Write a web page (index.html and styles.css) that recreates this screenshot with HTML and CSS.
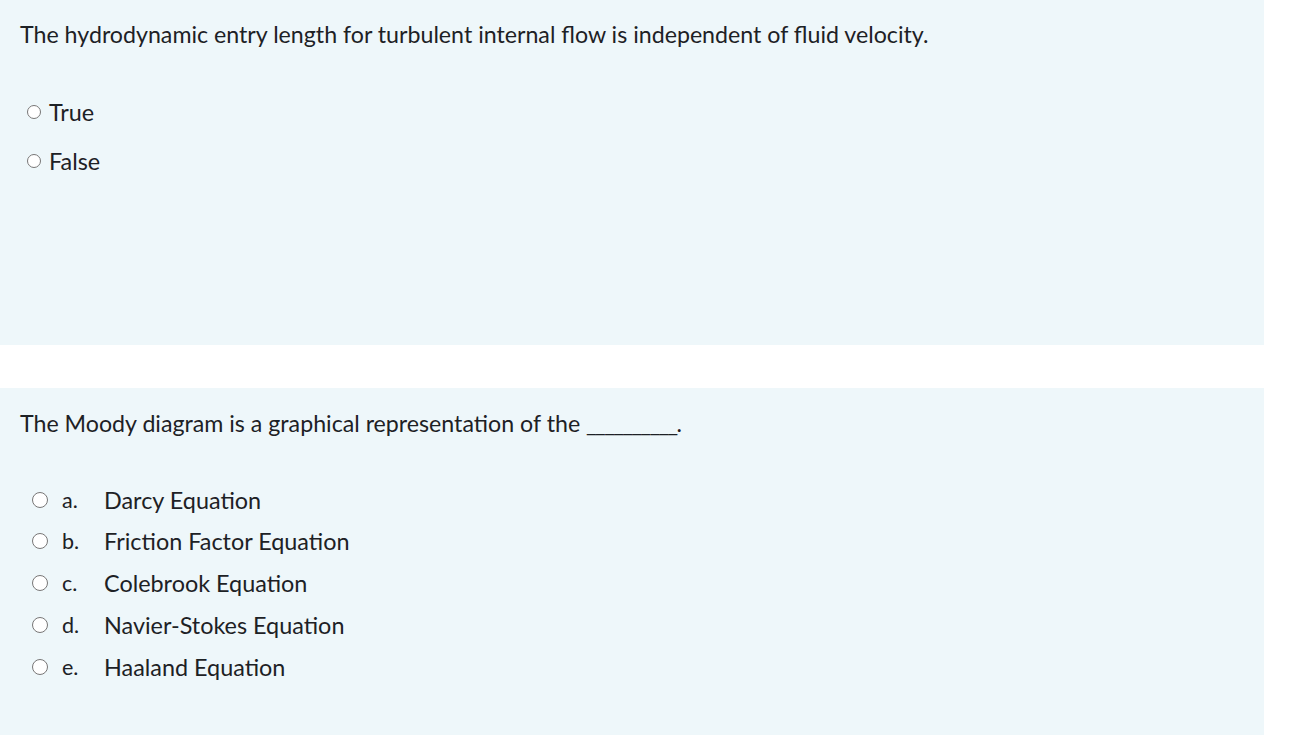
FILE: index.html
```html
<!DOCTYPE html>
<html lang="en">
<head>
<meta charset="utf-8">
<title>Quiz</title>
<link rel="stylesheet" href="styles.css">
</head>
<body>
<div class="page">
  <section class="panel panel-tf">
    <p class="qtext">The hydrodynamic entry length for turbulent internal flow is independent of fluid velocity.</p>
    <div class="answers answers-tf">
      <label class="opt"><input type="radio" name="q1" class="radio"><span class="otext">True</span></label>
      <label class="opt"><input type="radio" name="q1" class="radio"><span class="otext">False</span></label>
    </div>
  </section>
  <section class="panel panel-mc">
    <p class="qtext">The Moody diagram is a graphical representation of the <span class="blank">__________</span>.</p>
    <div class="answers answers-mc">
      <label class="opt"><input type="radio" name="q2" class="radio radio-lg"><span class="letter">a.</span><span class="otext">Darcy Equation</span></label>
      <label class="opt"><input type="radio" name="q2" class="radio radio-lg"><span class="letter">b.</span><span class="otext">Friction Factor Equation</span></label>
      <label class="opt"><input type="radio" name="q2" class="radio radio-lg"><span class="letter">c.</span><span class="otext">Colebrook Equation</span></label>
      <label class="opt"><input type="radio" name="q2" class="radio radio-lg"><span class="letter">d.</span><span class="otext">Navier-Stokes Equation</span></label>
      <label class="opt"><input type="radio" name="q2" class="radio radio-lg"><span class="letter">e.</span><span class="otext">Haaland Equation</span></label>
    </div>
  </section>
</div>
</body>
</html>
```

FILE: styles.css
```css
html, body {
  margin: 0;
  padding: 0;
  background: #ffffff;
}

body {
  font-family: Lato, "Open Sans", sans-serif;
  color: #1d2125;
  font-size: 23.4px;
}

.page {
  width: 1264px;
  display: flex;
  flex-direction: column;
  gap: 43px;
}

.panel {
  background: #eef7fa;
  box-sizing: border-box;
  padding: 19px 20px 0 20px;
}

.panel-tf {
  height: 345px;
}

.panel-mc {
  height: 347px;
  padding-top: 20px;
}

.qtext {
  margin: 0;
  line-height: 30px;
  font-size: 23.2px;
}

.blank {
  letter-spacing: -1.6px;
}

.answers {
  display: flex;
  flex-direction: column;
}

.answers-tf {
  margin-top: 48px;
  gap: 19px;
  padding-left: 7px;
}

.answers-mc {
  margin-top: 46.5px;
  gap: 11.75px;
  padding-left: 12px;
}

.opt {
  display: flex;
  align-items: center;
  height: 30px;
  line-height: 30px;
}

.radio {
  appearance: auto;
  margin: 0 8px 0 0;
  width: 14px;
  height: 14px;
  flex: none;
}

.radio-lg {
  width: 16px;
  height: 16px;
  margin-right: 14px;
}

.letter {
  width: 42px;
  flex: none;
  font-size: 21.5px;
}
```
